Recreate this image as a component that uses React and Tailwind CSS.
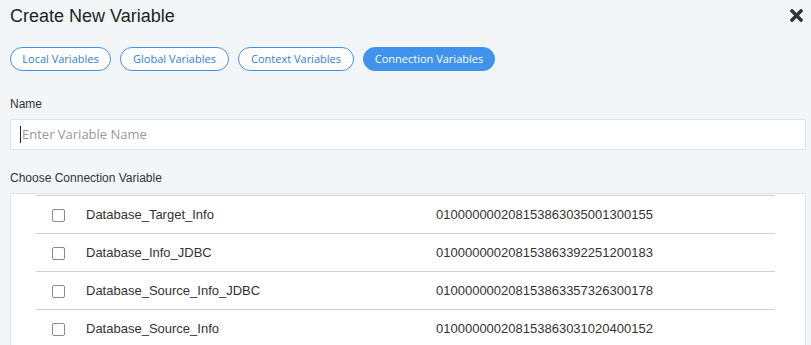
import { FaTimes } from 'react-icons/fa';

const tabs = [
  { label: 'Local Variables', width: 'w-[101px]' },
  { label: 'Global Variables', width: 'w-[109px]' },
  { label: 'Context Variables', width: 'w-[116px]' },
  { label: 'Connection Variables', width: 'w-[132px]', active: true },
];

const connections = [
  { name: 'Database_Target_Info', id: '010000000208153863035001300155' },
  { name: 'Database_Info_JDBC', id: '010000000208153863392251200183' },
  { name: 'Database_Source_Info_JDBC', id: '010000000208153863357326300178' },
  { name: 'Database_Source_Info', id: '010000000208153863031020400152' },
];

function App() {
  return (
    <div className="flex h-[345px] w-[811px] flex-col overflow-hidden bg-[#f2f6f9] pl-[10px] pr-[5px] font-['Liberation_Sans',Arial,sans-serif]">
      <div className="flex h-[32px] shrink-0 items-center justify-between pr-[3px]">
        <h1 className="text-[18px] leading-[22px] text-[#222]">Create New Variable</h1>
        <FaTimes className="mt-[-2px] h-[19px] w-[13px] text-[#333]" />
      </div>

      <div className="mt-[15px] flex shrink-0 gap-[9px] font-['Open_Sans',sans-serif] text-[11px]">
        {tabs.map((tab) => (
          <button
            className={
              tab.active
                ? `flex h-[24px] ${tab.width} items-center justify-center rounded-full border border-[#3f93ec] bg-[#3f93ec] text-white`
                : `flex h-[24px] ${tab.width} items-center justify-center rounded-full border border-[#3f93ec] bg-white text-[#2f80dd]`
            }
            key={tab.label}
            type="button"
          >
            {tab.label}
          </button>
        ))}
      </div>

      <label className="mt-[25px] shrink-0 text-[12px] leading-[16px] text-[#333]">Name</label>
      <div className="mt-[7px] flex h-[31px] shrink-0 items-center border border-[#e0e3e6] bg-white pl-[9px]">
        <span className="h-[17px] w-[1px] bg-[#222]" />
        <span className="ml-[1px] font-['Open_Sans',sans-serif] text-[13px] text-[#999]">Enter Variable Name</span>
      </div>

      <label className="mt-[20px] shrink-0 text-[12px] leading-[16px] text-[#333]">Choose Connection Variable</label>
      <div className="mt-[7px] flex-1 border border-b-0 border-[#e0e3e6] bg-white pl-[25px] pr-[30px] pt-[1px]">
        {connections.map((item) => (
          <div className="flex h-[38px] items-center border-t border-[#cdd1d5] pl-[16px] pt-[1px] text-[13px] text-[#333]" key={item.name}>
            <span className="h-[13px] w-[13px] shrink-0 rounded-[2px] border border-[#8a8a8a] bg-white" />
            <span className="ml-[21px] w-[350px]">{item.name}</span>
            <span>{item.id}</span>
          </div>
        ))}
      </div>
    </div>
  );
}

export default App;
